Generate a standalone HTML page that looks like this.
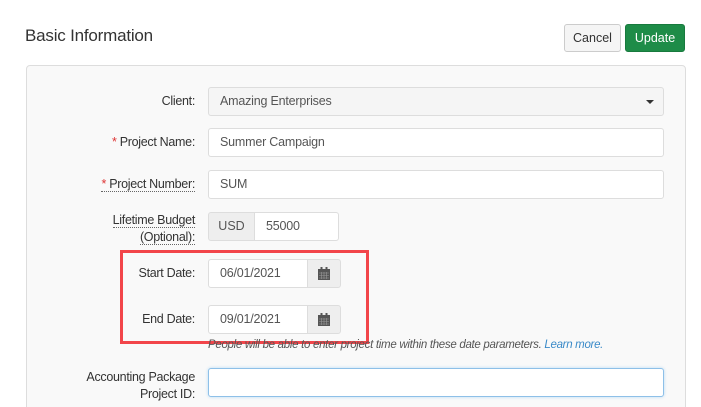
<!DOCTYPE html>
<html><head><meta charset="utf-8"><style>
*{box-sizing:border-box}
html,body{margin:0;width:701px;height:407px;overflow:hidden}
body{background:#fff;font-family:"Liberation Sans",sans-serif;color:#333;position:relative}
.abs{position:absolute}
h1{position:absolute;left:25px;top:26px;margin:0;font-size:17px;font-weight:normal;color:#333;letter-spacing:-0.2px}
.btn{position:absolute;top:24px;height:28px;border-radius:3px;font-size:12.5px;line-height:26px;text-align:center}
.panel{position:absolute;left:26px;top:65px;width:660px;height:360px;background:#f9f9f9;border:1px solid #ddd;border-radius:4px}
.lbl{position:absolute;right:506px;font-size:12.5px;color:#333;text-align:right;letter-spacing:-0.3px}
.u{border-bottom:1px dotted #666}
.inp{position:absolute;left:208px;height:29px;background:#fff;border:1px solid #ddd;border-radius:3px;font-size:12.5px;color:#555;padding-left:11px;line-height:27px;letter-spacing:-0.2px}
.star{color:#d33}
.add{position:absolute;background:#eee;border:1px solid #ddd;font-size:12.5px;color:#555;line-height:27px;text-align:center;height:29px}
</style></head><body>
<h1>Basic Information</h1>
<div class="btn" style="left:564px;width:57px;background:#f5f5f5;border:1px solid #ccc;color:#333">Cancel</div>
<div class="btn" style="left:625px;width:60px;background:#1e8c48;border:1px solid #187a3e;color:#fff">Update</div>
<div class="panel"></div>
<div class="lbl" style="top:94px">Client:</div>
<div class="inp" style="top:87px;width:456px;background:#f5f5f5">Amazing Enterprises<span class="abs" style="right:9px;top:12px;border:4px solid transparent;border-top:4px solid #333;border-bottom:0"></span></div>
<div class="lbl" style="top:135px"><span class="star">*</span> Project Name:</div>
<div class="inp" style="top:128px;width:456px">Summer Campaign</div>
<div class="lbl" style="top:177px"><span class="u"><span class="star">*</span> Project Number:</span></div>
<div class="inp" style="top:170px;width:456px">SUM</div>
<div class="lbl" style="top:212px;line-height:17px"><span class="u">Lifetime Budget</span><br><span class="u">(Optional):</span></div>
<div class="add" style="left:208px;top:212px;width:47px;border-radius:3px 0 0 3px">USD</div>
<div class="inp" style="left:254px;top:212px;width:85px;border-radius:0 3px 3px 0">55000</div>
<div class="lbl" style="top:266px">Start Date:</div>
<div class="inp" style="top:259px;width:100px;border-radius:3px 0 0 3px">06/01/2021</div>
<div class="add" style="left:307px;top:259px;width:34px;border-radius:0 3px 3px 0"><svg width="12" height="13" viewBox="0 0 12 13" style="margin-top:7px"><rect x="0" y="2" width="12" height="11" fill="#555"/><rect x="2.5" y="0" width="2" height="3" fill="#555"/><rect x="7.5" y="0" width="2" height="3" fill="#555"/><path d="M1 6h10M1 8.5h10M1 11h10M3.5 5v7M6 5v7M8.5 5v7" stroke="#999" stroke-width=".6"/></svg></div>
<div class="lbl" style="top:312px">End Date:</div>
<div class="inp" style="top:305px;width:100px;border-radius:3px 0 0 3px">09/01/2021</div>
<div class="add" style="left:307px;top:305px;width:34px;border-radius:0 3px 3px 0"><svg width="12" height="13" viewBox="0 0 12 13" style="margin-top:7px"><rect x="0" y="2" width="12" height="11" fill="#555"/><rect x="2.5" y="0" width="2" height="3" fill="#555"/><rect x="7.5" y="0" width="2" height="3" fill="#555"/><path d="M1 6h10M1 8.5h10M1 11h10M3.5 5v7M6 5v7M8.5 5v7" stroke="#999" stroke-width=".6"/></svg></div>
<div class="abs" style="left:120px;top:250px;width:249px;height:94px;border:3px solid #f2454a"></div>
<div class="abs" style="left:208px;top:339px;font-size:11.5px;font-style:italic;color:#555;letter-spacing:-0.3px;background:transparent">People will be able to enter project time within these date parameters. <span style="color:#3a8ac8">Learn more.</span></div>
<div class="lbl" style="top:369px;line-height:17px">Accounting Package<br>Project ID:</div>
<div class="inp" style="top:368px;width:456px;border-color:#8ec0e8;box-shadow:0 0 3px #b8daf4"></div>
</body></html>
